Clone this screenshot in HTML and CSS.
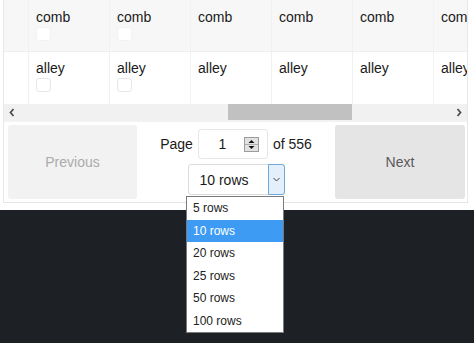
FILE: index.html
```html
<!DOCTYPE html>
<html>
<head>
<meta charset="utf-8">
<link rel="stylesheet" href="styles.css">
</head>
<body>
<div class="app">
  <div class="table-wrap">
    <div class="grid">
      <div class="row head">
        <div class="cell first"></div>
        <div class="cell"><span class="txt">comb</span><span class="check"></span></div>
        <div class="cell"><span class="txt">comb</span><span class="check"></span></div>
        <div class="cell"><span class="txt">comb</span></div>
        <div class="cell"><span class="txt">comb</span></div>
        <div class="cell"><span class="txt">comb</span></div>
        <div class="cell"><span class="txt">comb</span></div>
      </div>
      <div class="row body">
        <div class="cell first"></div>
        <div class="cell"><span class="txt">alley</span><span class="check"></span></div>
        <div class="cell"><span class="txt">alley</span><span class="check"></span></div>
        <div class="cell"><span class="txt">alley</span></div>
        <div class="cell"><span class="txt">alley</span></div>
        <div class="cell"><span class="txt">alley</span></div>
        <div class="cell"><span class="txt">alley</span></div>
      </div>
    </div>
    <div class="hscroll">
      <span class="sb-btn"><svg width="17" height="17" viewBox="0 0 17 17"><polyline points="9.5,5 6.5,8.5 9.5,12" fill="none" stroke="#505050" stroke-width="1.8"/></svg></span>
      <div class="sb-track"><div class="sb-thumb"></div></div>
      <span class="sb-btn"><svg width="17" height="17" viewBox="0 0 17 17"><polyline points="7.5,5 10.5,8.5 7.5,12" fill="none" stroke="#505050" stroke-width="1.8"/></svg></span>
    </div>
    <div class="pagination">
      <button class="btn prev">Previous</button>
      <div class="center">
        <div class="page-info">
          <span>Page</span>
          <div class="page-input">
            <span class="page-num">1</span>
            <svg class="spin" width="15" height="15" viewBox="0 0 15 15"><rect x="0.5" y="0.5" width="14" height="14" fill="#e2e2e2" stroke="#9c9c9c"/><line x1="1" y1="7.5" x2="14" y2="7.5" stroke="#b0b0b0"/><polygon points="4.5,6 10.5,6 7.5,3" fill="#111"/><polygon points="4.5,9 10.5,9 7.5,12" fill="#111"/></svg>
          </div>
          <span>of 556</span>
        </div>
        <div class="select">
          <span class="sel-val">10 rows</span>
          <span class="sel-arrow"><svg width="15" height="29" viewBox="0 0 15 29"><polyline points="4.5,13 7.5,16 10.5,13" fill="none" stroke="#444" stroke-width="1"/></svg></span>
        </div>
      </div>
      <button class="btn next">Next</button>
    </div>
  </div>
  <ul class="dropdown">
    <li>5 rows</li>
    <li class="active">10 rows</li>
    <li>20 rows</li>
    <li>25 rows</li>
    <li>50 rows</li>
    <li>100 rows</li>
  </ul>
</div>
<div class="dark"></div>
</body>
</html>
```

FILE: styles.css
```css
* { box-sizing: border-box; }
html, body {
  margin: 0;
  padding: 0;
  background: #1d2024;
  font-family: "Liberation Sans", Arial, sans-serif;
  color: #1a1a1a;
}
body {
  min-height: 343px;
}
.app {
  position: relative;
  z-index: 2;
  background: #fff;
  height: 210px;
  width: 474px;
  padding-left: 3px;
}
.dark {
  height: 133px;
  background: #1d2024;
}
.table-wrap {
  width: 465px;
  border-left: 1px solid #e8e8e8;
  border-right: 1px solid #e8e8e8;
  border-bottom: 1px solid #e4e4e4;
}
.grid {
  overflow: hidden;
  width: 463px;
}
.row {
  display: flex;
  height: 52px;
  white-space: nowrap;
}
.row.head {
  background: #f7f7f7;
  border-bottom: 1px solid #efefef;
}
.row.body {
  background: #fff;
}
.cell {
  flex: 0 0 81px;
  display: flex;
  flex-direction: column;
  align-items: flex-start;
  padding: 8px 7px 0;
  border-right: 1px solid #f1f1f1;
  font-size: 14px;
  line-height: 16px;
}
.row.head .cell { padding-top: 9px; }
.cell.first {
  flex: 0 0 25px;
}
.check {
  display: block;
  width: 15px;
  height: 14px;
  margin-top: 2px;
  background: #fff;
  border: 1px solid #e6e6e6;
  border-radius: 3px;
}
.row.head .check { border-color: #f2f2f2; }
.hscroll {
  display: flex;
  height: 17px;
  background: #f1f1f1;
}
.sb-btn {
  flex: 0 0 17px;
  height: 17px;
  display: block;
}
.sb-btn svg { display: block; }
.sb-track {
  flex: 1;
  padding-left: 207px;
}
.sb-thumb {
  width: 124px;
  height: 16px;
  background: #c1c1c1;
}
.pagination {
  display: flex;
  padding: 3px 2px 3px 4px;
  border-top: 1px solid #f3f3f3;
}
.btn {
  height: 74px;
  border: none;
  border-radius: 3px;
  font-family: "Liberation Sans", Arial, sans-serif;
  font-size: 14px;
  padding: 0;
}
.btn.prev {
  flex: 0 0 129px;
  background: #f2f2f2;
  color: #ababab;
}
.btn.next {
  flex: 0 0 130px;
  background: #e5e5e5;
  color: #595959;
}
.center {
  flex: 1;
  display: flex;
  flex-direction: column;
  align-items: center;
  padding-top: 4px;
  gap: 5px;
}
.page-info {
  display: flex;
  align-items: center;
  gap: 5px;
  font-size: 14px;
  height: 30px;
}
.page-input {
  width: 70px;
  height: 30px;
  border: 1px solid #e6e6e6;
  border-radius: 3px;
  display: flex;
  align-items: center;
  padding-right: 8px;
}
.page-num {
  flex: 1;
  text-align: center;
  padding-left: 2px;
}
.spin { display: block; }
.select {
  width: 97px;
  height: 31px;
  border: 1px solid #dcdcdc;
  border-radius: 3px;
  display: flex;
  align-items: center;
  font-size: 14px;
  padding-left: 11px;
  background: #fff;
}
.sel-val { flex: 1; }
.sel-arrow {
  width: 17px;
  height: 31px;
  margin-top: -1px;
  margin-bottom: -1px;
  margin-right: -1px;
  border: 1px solid #6ea8dc;
  background: #e3effa;
  border-radius: 0 3px 3px 0;
}
.sel-arrow svg { display: block; }
.dropdown {
  position: absolute;
  z-index: 5;
  left: 186px;
  top: 196px;
  width: 98px;
  height: 137px;
  margin: 0;
  padding: 0;
  list-style: none;
  background: #fff;
  border: 1px solid #7a7a7a;
  font-size: 12px;
  color: #222;
}
.dropdown li {
  height: 22.5px;
  line-height: 22.5px;
  padding-left: 6px;
}
.dropdown li.active {
  background: #3d9bf3;
  color: #fff;
}
```
